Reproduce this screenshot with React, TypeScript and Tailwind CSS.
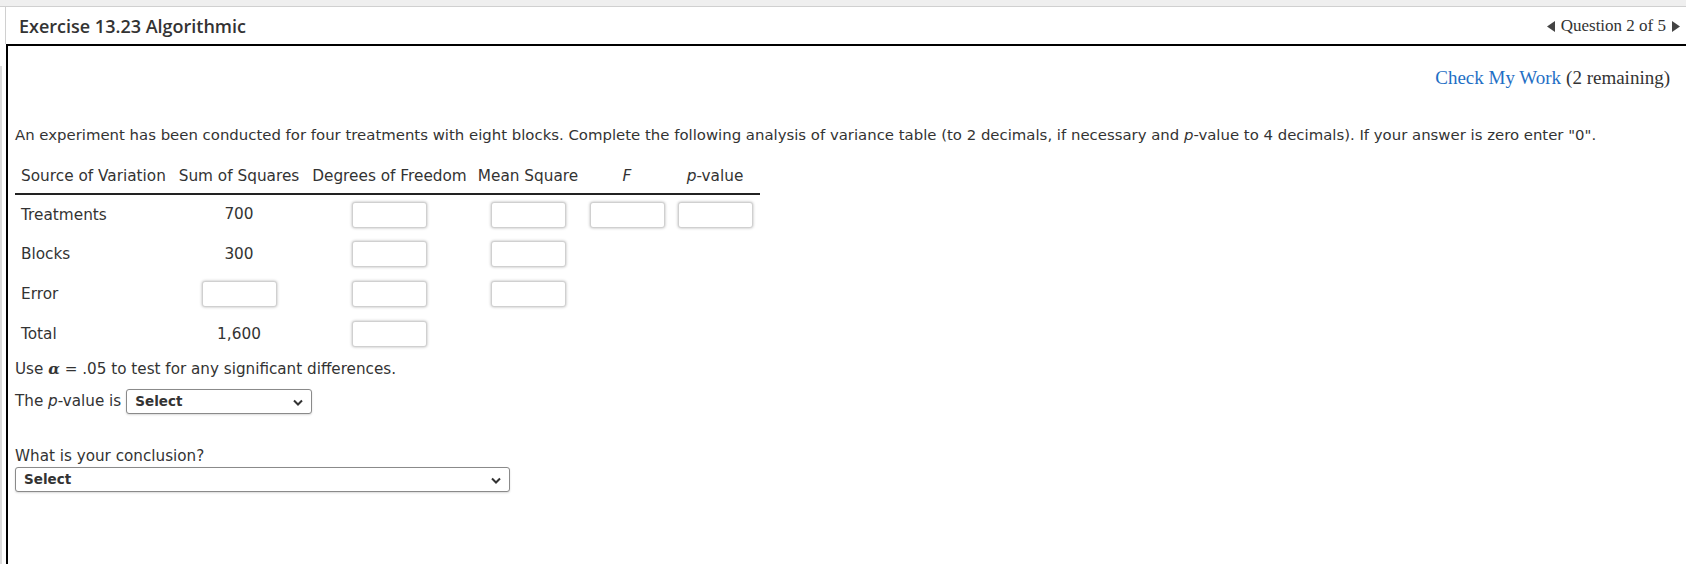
import React from "react";

const ROWS = [
  { label: "Treatments", ss: "700", ssInput: false, df: true, ms: true, f: true, p: true },
  { label: "Blocks", ss: "300", ssInput: false, df: true, ms: true, f: false, p: false },
  { label: "Error", ss: "", ssInput: true, df: true, ms: true, f: false, p: false },
  { label: "Total", ss: "1,600", ssInput: false, df: true, ms: false, f: false, p: false },
];

function Box() {
  return (
    <div className="w-[75px] h-[26px] mx-auto rounded-[3px] border border-[#d0d0d0] bg-white shadow-[0_0_3px_rgba(0,0,0,0.3)]" />
  );
}

function Chevron() {
  return (
    <svg width="14" height="14" viewBox="0 0 14 14" fill="none" stroke="#333" strokeWidth="2">
      <path d="M3 5.5 7 9.5l4-4" />
    </svg>
  );
}

function SelectBox({ className }: { className: string }) {
  return (
    <div
      className={`flex items-center justify-between h-[25px] pl-[8px] pr-[6px] rounded-[3px] border border-[#8a8a8a] bg-white shadow-[0_1px_2px_rgba(0,0,0,0.15)] ${className}`}
    >
      <span className="text-[13.5px] font-bold text-[#333]">Select</span>
      <Chevron />
    </div>
  );
}

export default function App() {
  return (
    <div className="w-[1686px] h-[564px] bg-white overflow-hidden flex flex-col font-['DejaVu_Sans',sans-serif] text-[#333]">
      {/* top strip */}
      <div className="h-[7px] bg-[#efefef] border-b border-[#d0d0d0] shrink-0" />

      {/* title bar */}
      <div className="h-[37px] flex items-center shrink-0">
        <div className="w-[6px] h-full border-r border-[#d0d0d0]" />
        <div className="pl-[13px] pt-[2px] font-['Open_Sans',sans-serif] font-semibold text-[18px] text-[#333]">
          Exercise 13.23 Algorithmic
        </div>
        <div className="ml-auto pr-[6px] flex items-center gap-[6px] font-['Liberation_Serif',serif] text-[17px] text-[#333] pt-[1px]">
          <svg width="8" height="11" viewBox="0 0 8 11" fill="#444">
            <path d="M8 0v11L0 5.5z" />
          </svg>
          <span>Question 2 of 5</span>
          <svg width="8" height="11" viewBox="0 0 8 11" fill="#444">
            <path d="M0 0v11l8-5.5z" />
          </svg>
        </div>
      </div>

      <div className="flex flex-1">
        {/* left rail */}
        <div className="w-[6px] flex flex-col">
          <div className="h-[22px]" />
          <div className="w-[2px] flex-1 bg-[#dcdcdc]" />
        </div>

        {/* main panel */}
        <div className="flex-1 border-t-2 border-l-2 border-black pl-[7px] pr-[16px]">
          <div className="mt-[22px] h-[20px] flex justify-end items-center font-['Liberation_Serif',serif] text-[19px]">
            <span className="text-[#1f6fc5]">Check My Work</span>
            <span className="ml-[5px] text-[#333]">(2 remaining)</span>
          </div>

          <p className="mt-[37px] text-[14.9px] leading-[20px]">
            An experiment has been conducted for four treatments with eight blocks. Complete the following analysis of
            variance table (to 2 decimals, if necessary and <i>p</i>-value to 4 decimals). If your answer is zero enter
            "0".
          </p>

          <table className="mt-[12px] border-collapse text-[15.3px]">
            <thead>
              <tr className="h-[37px] border-b-2 border-[#222]">
                <th className="w-[156px] text-left font-normal pl-[6px] align-top pt-[8px] whitespace-nowrap">
                  Source of Variation
                </th>
                <th className="w-[136px] font-normal align-top pt-[8px] whitespace-nowrap">Sum of Squares</th>
                <th className="w-[165px] font-normal align-top pt-[8px] whitespace-nowrap">Degrees of Freedom</th>
                <th className="w-[112px] font-normal align-top pt-[8px] whitespace-nowrap">Mean Square</th>
                <th className="w-[86px] font-normal align-top pt-[8px]">
                  <i>F</i>
                </th>
                <th className="w-[90px] font-normal align-top pt-[8px]">
                  <i>p</i>-value
                </th>
              </tr>
            </thead>
            <tbody>
              {ROWS.map((r) => (
                <tr key={r.label} className="h-[40px]">
                  <td className="pl-[6px] pt-[1px]">{r.label}</td>
                  <td className="text-center">{r.ssInput ? <Box /> : r.ss}</td>
                  <td>{r.df && <Box />}</td>
                  <td>{r.ms && <Box />}</td>
                  <td>{r.f && <Box />}</td>
                  <td>{r.p && <Box />}</td>
                </tr>
              ))}
            </tbody>
          </table>

          <div className="mt-[5px] text-[15.2px] leading-[20px]">
            Use <span className="font-['DejaVu_Serif',serif] font-bold italic">α</span> = .05 to test for any significant
            differences.
          </div>

          <div className="mt-[10px] flex items-center text-[15.2px]">
            <span>
              The <i>p</i>-value is
            </span>
            <SelectBox className="ml-[5px] w-[186px]" />
          </div>

          <div className="mt-[32px] text-[15.2px] leading-[20px]">What is your conclusion?</div>
          <SelectBox className="mt-[1px] w-[495px]" />
        </div>
      </div>
    </div>
  );
}
